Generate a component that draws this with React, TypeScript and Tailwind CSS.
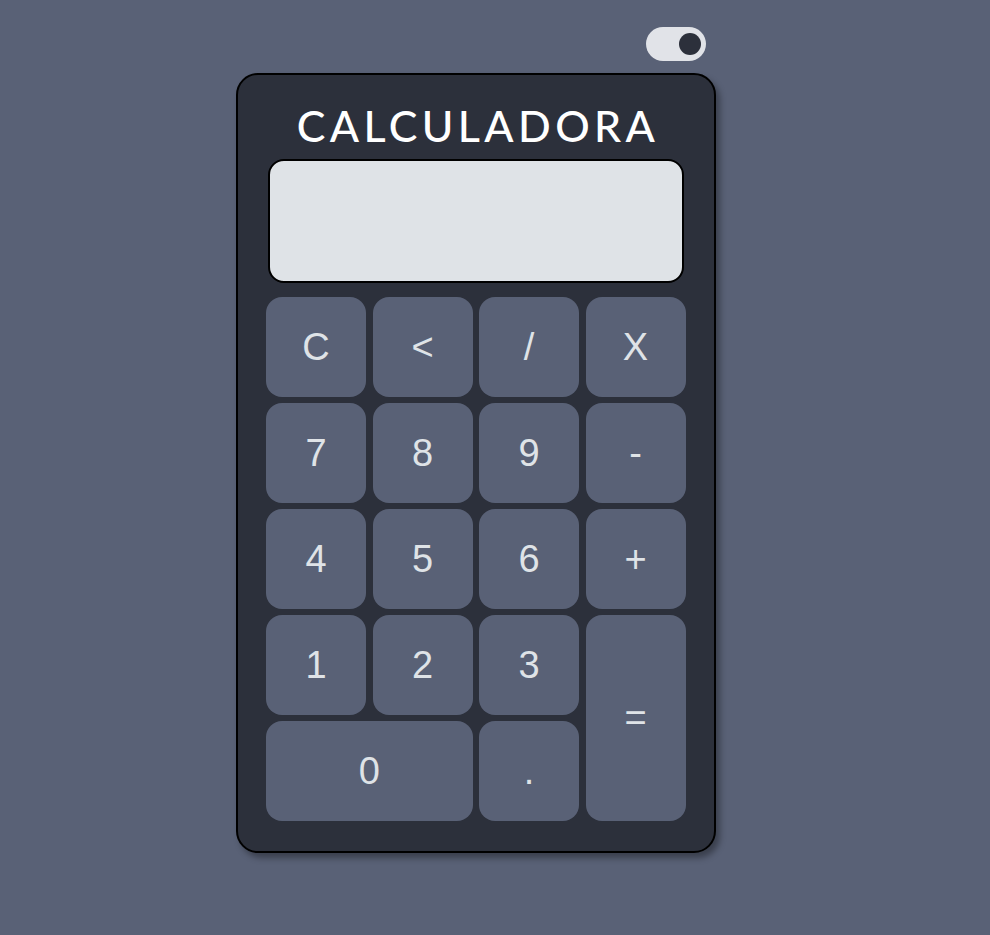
import React, { useState } from "react";

const keys: { label: string; span?: string }[] = [
  { label: "C" },
  { label: "<" },
  { label: "/" },
  { label: "X" },
  { label: "7" },
  { label: "8" },
  { label: "9" },
  { label: "-" },
  { label: "4" },
  { label: "5" },
  { label: "6" },
  { label: "+" },
  { label: "1" },
  { label: "2" },
  { label: "3" },
  { label: "=", span: "row-span-2" },
  { label: "0", span: "col-span-2" },
  { label: "." },
];

const App: React.FC = () => {
  const [display, setDisplay] = useState<string>("");
  const [dark, setDark] = useState<boolean>(true);

  const press = (k: string) => {
    if (k === "C") return setDisplay("");
    if (k === "<") return setDisplay((d) => d.slice(0, -1));
    if (k === "=") {
      try {
        // eslint-disable-next-line no-new-func
        const out = Function(`return (${display.replace(/X/g, "*")})`)();
        setDisplay(String(out));
      } catch {
        setDisplay("Erro");
      }
      return;
    }
    setDisplay((d) => d + k);
  };

  return (
    <div className="min-h-[935px] w-full bg-[#596176] relative font-['Liberation_Sans',Arial,sans-serif]">
      <button
        onClick={() => setDark(!dark)}
        className="absolute left-[646px] top-[27px] w-[60px] h-[34px] rounded-full bg-[#e1e3e8] flex items-center justify-end pr-[5px]"
      >
        <span className="block w-[22px] h-[22px] rounded-full bg-[#2c303b]" />
      </button>

      <div className="pt-[73px] pl-[236px]">
        <div className="w-[480px] h-[780px] bg-[#2c303b] border-2 border-black rounded-[22px] shadow-[4px_5px_6px_rgba(0,0,0,0.35)] px-[28px] pt-[26px]">
          <h1 className="text-center text-white text-[43px] leading-[50px] tracking-[4.4px] pl-[4px] font-['Lato',sans-serif] font-medium">
            CALCULADORA
          </h1>
          <div className="mt-[8px] ml-[2px] w-[416px] h-[124px] bg-[#dfe3e7] border-2 border-black rounded-[16px] flex items-center justify-end px-4 text-[40px] text-[#2c303b]">
            {display}
          </div>
          <div className="mt-[14px] grid grid-cols-[repeat(4,100px)] grid-rows-[repeat(5,100px)] gap-y-[6px] gap-x-[6.5px]">
            {keys.map((k) => (
              <button
                key={k.label}
                onClick={() => press(k.label)}
                className={`bg-[#596176] rounded-[16px] text-[#dfe3e7] text-[38px] flex items-center justify-center ${k.span ?? ""}`}
              >
                {k.label}
              </button>
            ))}
          </div>
        </div>
      </div>
    </div>
  );
};

export default App;
